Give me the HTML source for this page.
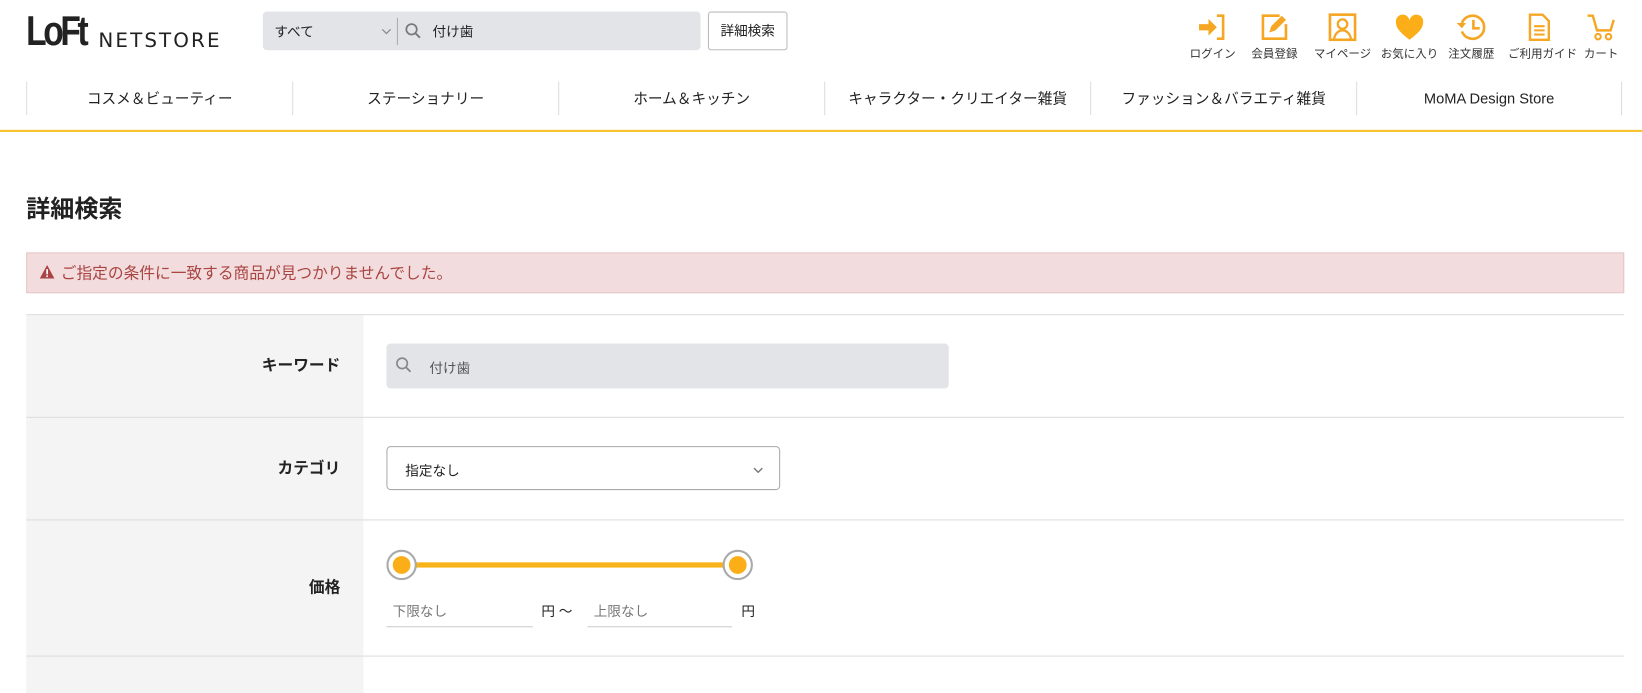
<!DOCTYPE html><html><head><meta charset="utf-8"><style>
*{box-sizing:border-box;margin:0;padding:0}
body{width:1642px;height:662px;overflow:hidden;background:#fff;font-family:"Liberation Sans","Noto Sans CJK JP",sans-serif;color:#222;position:relative}
#w{position:absolute;left:0;top:0;width:1568px;height:632px;transform:scale(1.0472);transform-origin:0 0}
.a{position:absolute}
.ic{position:absolute;top:12px;width:60px;text-align:center}
.ic svg{display:block;margin:0 auto}
.ic span{display:block;font-size:11px;margin-top:3px;color:#333;white-space:nowrap}
.nav{position:absolute;top:78px;height:32px;border-left:1px solid #ddd;font-size:14px;text-align:center;line-height:32px;width:254px}
.lab{position:absolute;left:25px;width:300px;text-align:right;font-weight:bold;font-size:15px}
</style></head><body><div id="w">
<div class="a" style="left:25px;top:10px;font-weight:900;font-size:40px;letter-spacing:-4px;line-height:40px;font-family:'Liberation Sans',sans-serif;transform:scaleX(0.8);transform-origin:0 0">LoFt</div>
<div class="a" style="left:94px;top:29px;font-size:19px;letter-spacing:2px;font-family:'DejaVu Sans',sans-serif;line-height:20px">NETSTORE</div>
<div class="a" style="left:251px;top:11px;width:418px;height:37px;background:#e3e4e7;border-radius:4px"></div>
<div class="a" style="left:262px;top:20px;font-size:13px">すべて</div>
<svg class="a" style="left:364px;top:27px" width="10" height="7"><path d="M1 1l4 4 4-4" fill="none" stroke="#888" stroke-width="1.2"/></svg>
<div class="a" style="left:379px;top:17px;width:1px;height:26px;background:#aaa"></div>
<svg class="a" style="left:387px;top:22px" width="15" height="15"><circle cx="6" cy="6" r="5" fill="none" stroke="#777" stroke-width="1.6"/><line x1="10" y1="10" x2="14" y2="14" stroke="#777" stroke-width="1.8"/></svg>
<div class="a" style="left:413px;top:20px;font-size:13px">付け歯</div>
<div class="a" style="left:676px;top:11px;width:76px;height:37px;border:1px solid #bbb;border-radius:3px;font-size:13px;text-align:center;line-height:35px">詳細検索</div>
<div class="ic" style="left:1128px"><svg width="30" height="28"><path d="M2 11h9V6l8 8-8 8v-5H2z" fill="#f5a623"/><path d="M19 3h6v22h-6" fill="none" stroke="#f5a623" stroke-width="2.5"/></svg><span>ログイン</span></div>
<div class="ic" style="left:1187px"><svg width="30" height="28"><path d="M20 3H4v22h22V11" fill="none" stroke="#f5a623" stroke-width="2.5"/><path d="M10 19l2-6 10-10 4 4-10 10z" fill="#f5a623"/></svg><span>会員登録</span></div>
<div class="ic" style="left:1252px"><svg width="30" height="28"><rect x="3" y="2" width="24" height="24" fill="none" stroke="#f5a623" stroke-width="2.5"/><circle cx="15" cy="11" r="4.5" fill="none" stroke="#f5a623" stroke-width="2.2"/><path d="M7 25c1-6 5-8 8-8s7 2 8 8" fill="none" stroke="#f5a623" stroke-width="2.2"/></svg><span>マイページ</span></div>
<div class="ic" style="left:1316px"><svg width="30" height="28"><path d="M15 26C6 19 2 15 2 9a6.5 6.5 0 0 1 13-1 6.5 6.5 0 0 1 13 1c0 6-4 10-13 17z" fill="#fbae17"/></svg><span>お気に入り</span></div>
<div class="ic" style="left:1375px"><svg width="30" height="28"><path d="M6 10a11 11 0 1 1 0 8" fill="none" stroke="#f5a623" stroke-width="2.5"/><path d="M1 10h9l-4 5z" fill="#f5a623"/><path d="M17 7v8h6" fill="none" stroke="#f5a623" stroke-width="2.5"/></svg><span>注文履歴</span></div>
<div class="ic" style="left:1440px"><svg width="30" height="28"><path d="M6 2h12l6 6v18H6z" fill="none" stroke="#f5a623" stroke-width="2.3"/><path d="M10 13h10M10 17h10M10 21h10" stroke="#f5a623" stroke-width="2"/></svg><span>ご利用ガイド</span></div>
<div class="ic" style="left:1499px"><svg width="30" height="28"><path d="M2 3h5l4 14h13l3-10" fill="none" stroke="#f5a623" stroke-width="2.3"/><circle cx="12" cy="23" r="2.6" fill="none" stroke="#f5a623" stroke-width="2"/><circle cx="22" cy="23" r="2.6" fill="none" stroke="#f5a623" stroke-width="2"/></svg><span>カート</span></div>
<div class="nav" style="left:25px">コスメ＆ビューティー</div>
<div class="nav" style="left:279px">ステーショナリー</div>
<div class="nav" style="left:533px">ホーム＆キッチン</div>
<div class="nav" style="left:787px">キャラクター・クリエイター雑貨</div>
<div class="nav" style="left:1041px">ファッション＆バラエティ雑貨</div>
<div class="nav" style="left:1295px;border-right:1px solid #ddd">MoMA Design Store</div>
<div class="a" style="left:0;top:124px;width:1568px;height:2px;background:#f7c12a"></div>
<div class="a" style="left:25px;top:180px;font-size:23px;font-weight:bold">詳細検索</div>
<div class="a" style="left:25px;top:241px;width:1526px;height:39px;background:#f2dcdd;border:1px solid #e6c6c8"></div>
<svg class="a" style="left:37px;top:252px" width="16" height="15"><path d="M8 1L15 14H1z" fill="#a94442"/><rect x="7.2" y="5" width="1.6" height="5" fill="#fff"/><rect x="7.2" y="11" width="1.6" height="1.6" fill="#fff"/></svg>
<div class="a" style="left:58px;top:250px;font-size:15px;color:#a94442">ご指定の条件に一致する商品が見つかりませんでした。</div>
<div class="a" style="left:25px;top:300px;width:322px;height:362px;background:#f4f4f4"></div>
<div class="a" style="left:25px;top:300px;width:1526px;height:1px;background:#ddd"></div>
<div class="a" style="left:25px;top:398px;width:1526px;height:1px;background:#ddd"></div>
<div class="a" style="left:25px;top:496px;width:1526px;height:1px;background:#ddd"></div>
<div class="a" style="left:25px;top:626px;width:1526px;height:1px;background:#ddd"></div>
<div class="lab" style="top:338px">キーワード</div>
<div class="lab" style="top:436px">カテゴリ</div>
<div class="lab" style="top:550px">価格</div>
<div class="a" style="left:369px;top:328px;width:537px;height:43px;background:#e3e4e7;border-radius:4px"></div>
<svg class="a" style="left:378px;top:341px" width="15" height="15"><circle cx="6" cy="6" r="5" fill="none" stroke="#888" stroke-width="1.6"/><line x1="10" y1="10" x2="14" y2="14" stroke="#888" stroke-width="1.8"/></svg>
<div class="a" style="left:410px;top:341px;font-size:13px;color:#555">付け歯</div>
<div class="a" style="left:369px;top:426px;width:376px;height:42px;border:1px solid #aaa;border-radius:4px"></div>
<div class="a" style="left:387px;top:439px;font-size:13px">指定なし</div>
<svg class="a" style="left:719px;top:446px" width="10" height="7"><path d="M1 1l4 4 4-4" fill="none" stroke="#777" stroke-width="1.3"/></svg>
<div class="a" style="left:383px;top:537px;width:321px;height:5px;background:#f7b319"></div>
<div class="a" style="left:369px;top:525px;width:29px;height:29px;border-radius:50%;background:#fff;border:2px solid #aaa"></div>
<div class="a" style="left:375px;top:531px;width:17px;height:17px;border-radius:50%;background:#fbae17"></div>
<div class="a" style="left:690px;top:525px;width:29px;height:29px;border-radius:50%;background:#fff;border:2px solid #aaa"></div>
<div class="a" style="left:696px;top:531px;width:17px;height:17px;border-radius:50%;background:#fbae17"></div>
<div class="a" style="left:369px;top:598px;width:140px;height:1px;background:#ccc"></div>
<div class="a" style="left:561px;top:598px;width:138px;height:1px;background:#ccc"></div>
<div class="a" style="left:375px;top:573px;font-size:13px;color:#777">下限なし</div>
<div class="a" style="left:567px;top:573px;font-size:13px;color:#777">上限なし</div>
<div class="a" style="left:517px;top:573px;font-size:13px">円 〜</div>
<div class="a" style="left:708px;top:573px;font-size:13px">円</div>
</div></body></html>
